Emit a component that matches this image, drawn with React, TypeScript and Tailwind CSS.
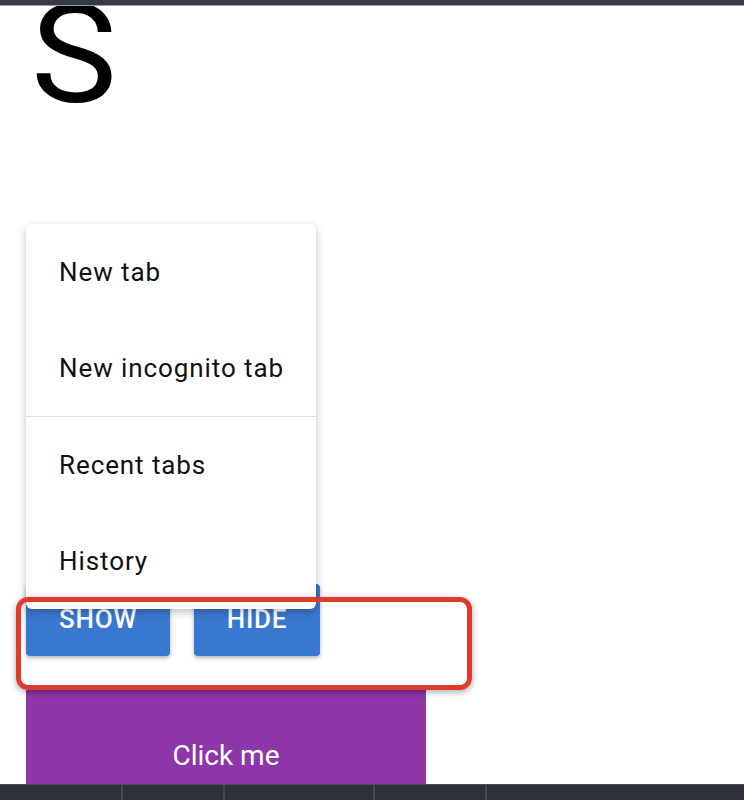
import React from "react";

const items1 = ["New tab", "New incognito tab"];
const items2 = ["Recent tabs", "History"];

export default function App() {
  return (
    <div className="relative w-[744px] h-[800px] overflow-hidden bg-white font-['Roboto',sans-serif]">
      <div className="relative z-10 h-[5px] bg-[#363a48] border-b-[1.5px] border-[#9a9ca2] box-content" />
      <div className="flex flex-col pl-[26px]">
        <div className="ml-[5px] w-fit origin-left scale-x-[1.05] text-[138px] leading-[98px] font-normal text-black">S</div>
        <div className="h-[480px]" />
        <div className="flex gap-[24px]">
          <button className="w-[144px] h-[72px] rounded-[4px] bg-[#3878d0] text-white text-[26px] font-medium tracking-[0.03em] pb-[1px] shadow-[0_2px_4px_rgba(0,0,0,0.3)]">
            SHOW
          </button>
          <button className="w-[126px] h-[72px] rounded-[4px] bg-[#3878d0] text-white text-[26px] font-medium tracking-[0.03em] pb-[1px] shadow-[0_2px_4px_rgba(0,0,0,0.3)]">
            HIDE
          </button>
        </div>
        <div className="mt-[34px] w-[400px] h-[94px] bg-[#8e35a8] flex items-center justify-center pt-[38px] text-white text-[28px]">
          Click me
        </div>
      </div>

      <div className="absolute left-[26px] top-[224px] w-[290px] bg-white rounded-[6px] shadow-[0_3px_8px_rgba(0,0,0,0.25)] text-[26px] tracking-[0.035em] text-[#111]">
        {items1.map((t) => (
          <div key={t} className="h-[96px] flex items-center pl-[33px]">{t}</div>
        ))}
        <div className="h-px bg-[#dcdcdc]" />
        {items2.map((t) => (
          <div key={t} className="h-[96px] flex items-center pl-[33px]">{t}</div>
        ))}
      </div>

      <div className="absolute left-[16px] top-[597px] w-[456px] h-[93px] rounded-[12px] border-[5px] border-[#e03a2a] shadow-[0_2px_6px_rgba(0,0,0,0.35)]" />

      <div className="absolute left-0 right-0 bottom-0 h-[16px] bg-[#2e313b] border-t border-[#4a4d57] flex">
        <div className="w-[123px] border-r-2 border-[#454955]" />
        <div className="w-[102px] border-r-2 border-[#454955]" />
        <div className="w-[150px] border-r-2 border-[#454955]" />
        <div className="w-[112px] border-r-2 border-[#454955]" />
      </div>
    </div>
  );
}
